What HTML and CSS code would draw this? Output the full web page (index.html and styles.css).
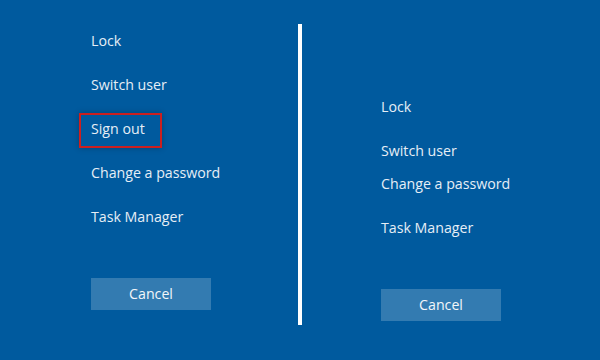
FILE: index.html
```html
<!DOCTYPE html>
<html>
<head>
<meta charset="utf-8">
<link rel="stylesheet" href="styles.css">
</head>
<body>
<div class="screen">
  <div class="panel panel-left">
    <div class="item">Lock</div>
    <div class="item">Switch user</div>
    <div class="item"><span class="highlight">Sign out</span></div>
    <div class="item">Change a password</div>
    <div class="item">Task Manager</div>
    <div class="btn">Cancel</div>
  </div>
  <div class="divider"></div>
  <div class="panel panel-right">
    <div class="item">Lock</div>
    <div class="item tight">Switch user</div>
    <div class="item">Change a password</div>
    <div class="item">Task Manager</div>
    <div class="btn">Cancel</div>
  </div>
</div>
</body>
</html>
```
FILE: styles.css
```css
html, body {
  margin: 0;
  padding: 0;
}
body {
  width: 600px;
  height: 360px;
  background: #005a9e;
  font-family: "Open Sans", "Noto Sans", sans-serif;
  font-size: 14.2px;
  color: #e6eef6;
  overflow: hidden;
}
.screen {
  display: flex;
  height: 360px;
}
.panel {
  display: flex;
  flex-direction: column;
  align-items: flex-start;
  box-sizing: border-box;
}
.panel-left {
  width: 298px;
  padding: 30px 0 0 91px;
}
.panel-right {
  flex: 1;
  padding: 96px 0 0 79px;
}
.item {
  line-height: 22px;
  height: 22px;
  margin-bottom: 22px;
  white-space: nowrap;
}
.item.tight {
  margin-bottom: 11px;
}
.highlight {
  position: relative;
}
.highlight::after {
  content: "";
  position: absolute;
  left: -12px;
  top: -6px;
  width: 79px;
  height: 31px;
  border: 2px solid #cc1f1f;
  box-shadow: 0 0 6px rgba(0, 0, 0, 0.25);
}
.btn {
  margin-top: 28px;
  width: 120px;
  height: 32px;
  line-height: 32px;
  text-align: center;
  background: #337bb1;
  color: #f2f6fa;
}
.divider {
  width: 4px;
  height: 301px;
  margin-top: 24px;
  background: #ffffff;
}
```
